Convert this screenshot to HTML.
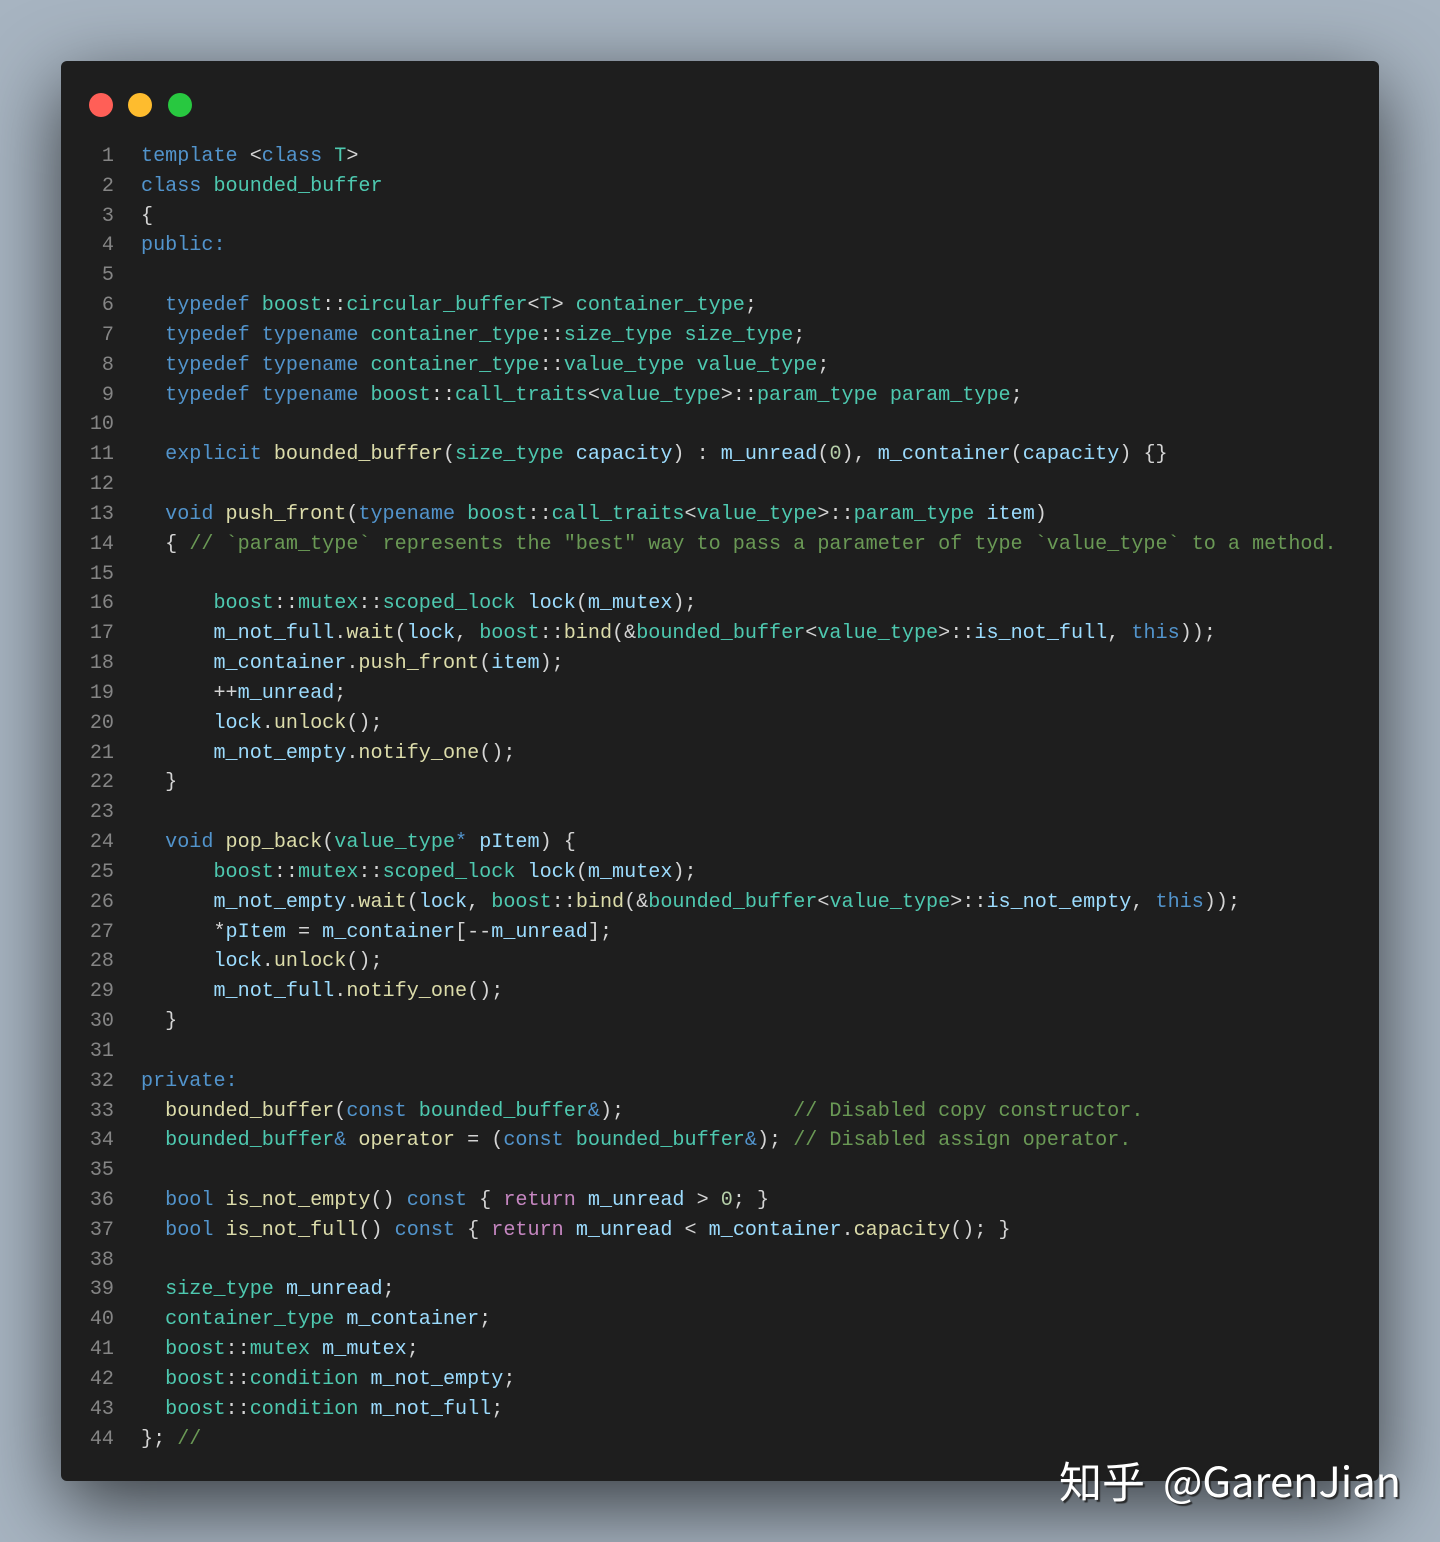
<!DOCTYPE html>
<html lang="zh">
<head>
<meta charset="utf-8">
<title>bounded_buffer</title>
<style>
html,body{margin:0;padding:0;width:1440px;height:1542px;overflow:hidden;background:#a7b4c1}
#card{position:absolute;left:61px;top:61px;width:1318px;height:1420px;background:#1e1e1e;border-radius:6px;box-shadow:0 24px 80px rgba(0,0,0,.68)}
.d{position:absolute;top:32px;width:24px;height:24px;border-radius:50%}
pre{position:absolute;margin:0;font-family:"Liberation Mono",monospace;font-size:20.135px;line-height:29.83px;white-space:pre;color:#d4d4d4}
#nums{left:28px;top:81px;color:#858585;width:25px;text-align:right}
#code{left:80px;top:81px}
.k{color:#5294cc}.t{color:#4ec9b0}.f{color:#dcdcaa}.v{color:#9cdcfe}.c{color:#6a9955}.p{color:#c586c0}.n{color:#b5cea8}
#wm{position:absolute;left:1059px;top:1446px;font-family:"Noto Sans CJK SC","Liberation Sans",sans-serif;font-size:43px;line-height:68px;color:#fff;white-space:pre;text-shadow:2px 2px 1px rgba(30,30,30,.85)}
#wm span{position:absolute;left:104px;top:-1px;font-size:41.6px}
</style>
</head>
<body>
<div id="card">
<div class="d" style="left:28px;background:#ff5f57"></div>
<div class="d" style="left:67px;background:#febc2e"></div>
<div class="d" style="left:107px;background:#28c840"></div>
<pre id="nums">1
2
3
4
5
6
7
8
9
10
11
12
13
14
15
16
17
18
19
20
21
22
23
24
25
26
27
28
29
30
31
32
33
34
35
36
37
38
39
40
41
42
43
44</pre>
<pre id="code"><span class="k">template</span> &lt;<span class="k">class</span> <span class="t">T</span>&gt;
<span class="k">class</span> <span class="t">bounded_buffer</span>
{
<span class="k">public:</span>

  <span class="k">typedef</span> <span class="t">boost</span>::<span class="t">circular_buffer</span>&lt;<span class="t">T</span>&gt; <span class="t">container_type</span>;
  <span class="k">typedef</span> <span class="k">typename</span> <span class="t">container_type</span>::<span class="t">size_type</span> <span class="t">size_type</span>;
  <span class="k">typedef</span> <span class="k">typename</span> <span class="t">container_type</span>::<span class="t">value_type</span> <span class="t">value_type</span>;
  <span class="k">typedef</span> <span class="k">typename</span> <span class="t">boost</span>::<span class="t">call_traits</span>&lt;<span class="t">value_type</span>&gt;::<span class="t">param_type</span> <span class="t">param_type</span>;

  <span class="k">explicit</span> <span class="f">bounded_buffer</span>(<span class="t">size_type</span> <span class="v">capacity</span>) : <span class="v">m_unread</span>(<span class="n">0</span>), <span class="v">m_container</span>(<span class="v">capacity</span>) {}

  <span class="k">void</span> <span class="f">push_front</span>(<span class="k">typename</span> <span class="t">boost</span>::<span class="t">call_traits</span>&lt;<span class="t">value_type</span>&gt;::<span class="t">param_type</span> <span class="v">item</span>)
  { <span class="c">// `param_type` represents the "best" way to pass a parameter of type `value_type` to a method.</span>

      <span class="t">boost</span>::<span class="t">mutex</span>::<span class="t">scoped_lock</span> <span class="v">lock</span>(<span class="v">m_mutex</span>);
      <span class="v">m_not_full</span>.<span class="f">wait</span>(<span class="v">lock</span>, <span class="t">boost</span>::<span class="f">bind</span>(&amp;<span class="t">bounded_buffer</span>&lt;<span class="t">value_type</span>&gt;::<span class="v">is_not_full</span>, <span class="k">this</span>));
      <span class="v">m_container</span>.<span class="f">push_front</span>(<span class="v">item</span>);
      ++<span class="v">m_unread</span>;
      <span class="v">lock</span>.<span class="f">unlock</span>();
      <span class="v">m_not_empty</span>.<span class="f">notify_one</span>();
  }

  <span class="k">void</span> <span class="f">pop_back</span>(<span class="t">value_type</span><span class="k">*</span> <span class="v">pItem</span>) {
      <span class="t">boost</span>::<span class="t">mutex</span>::<span class="t">scoped_lock</span> <span class="v">lock</span>(<span class="v">m_mutex</span>);
      <span class="v">m_not_empty</span>.<span class="f">wait</span>(<span class="v">lock</span>, <span class="t">boost</span>::<span class="f">bind</span>(&amp;<span class="t">bounded_buffer</span>&lt;<span class="t">value_type</span>&gt;::<span class="v">is_not_empty</span>, <span class="k">this</span>));
      *<span class="v">pItem</span> = <span class="v">m_container</span>[--<span class="v">m_unread</span>];
      <span class="v">lock</span>.<span class="f">unlock</span>();
      <span class="v">m_not_full</span>.<span class="f">notify_one</span>();
  }

<span class="k">private:</span>
  <span class="f">bounded_buffer</span>(<span class="k">const</span> <span class="t">bounded_buffer</span><span class="k">&amp;</span>);              <span class="c">// Disabled copy constructor.</span>
  <span class="t">bounded_buffer</span><span class="k">&amp;</span> <span class="f">operator</span> = (<span class="k">const</span> <span class="t">bounded_buffer</span><span class="k">&amp;</span>); <span class="c">// Disabled assign operator.</span>

  <span class="k">bool</span> <span class="f">is_not_empty</span>() <span class="k">const</span> { <span class="p">return</span> <span class="v">m_unread</span> &gt; <span class="n">0</span>; }
  <span class="k">bool</span> <span class="f">is_not_full</span>() <span class="k">const</span> { <span class="p">return</span> <span class="v">m_unread</span> &lt; <span class="v">m_container</span>.<span class="f">capacity</span>(); }

  <span class="t">size_type</span> <span class="v">m_unread</span>;
  <span class="t">container_type</span> <span class="v">m_container</span>;
  <span class="t">boost</span>::<span class="t">mutex</span> <span class="v">m_mutex</span>;
  <span class="t">boost</span>::<span class="t">condition</span> <span class="v">m_not_empty</span>;
  <span class="t">boost</span>::<span class="t">condition</span> <span class="v">m_not_full</span>;
}; <span class="c">//</span></pre>
</div>
<div id="wm">知乎<span>@GarenJian</span></div>
</body>
</html>
